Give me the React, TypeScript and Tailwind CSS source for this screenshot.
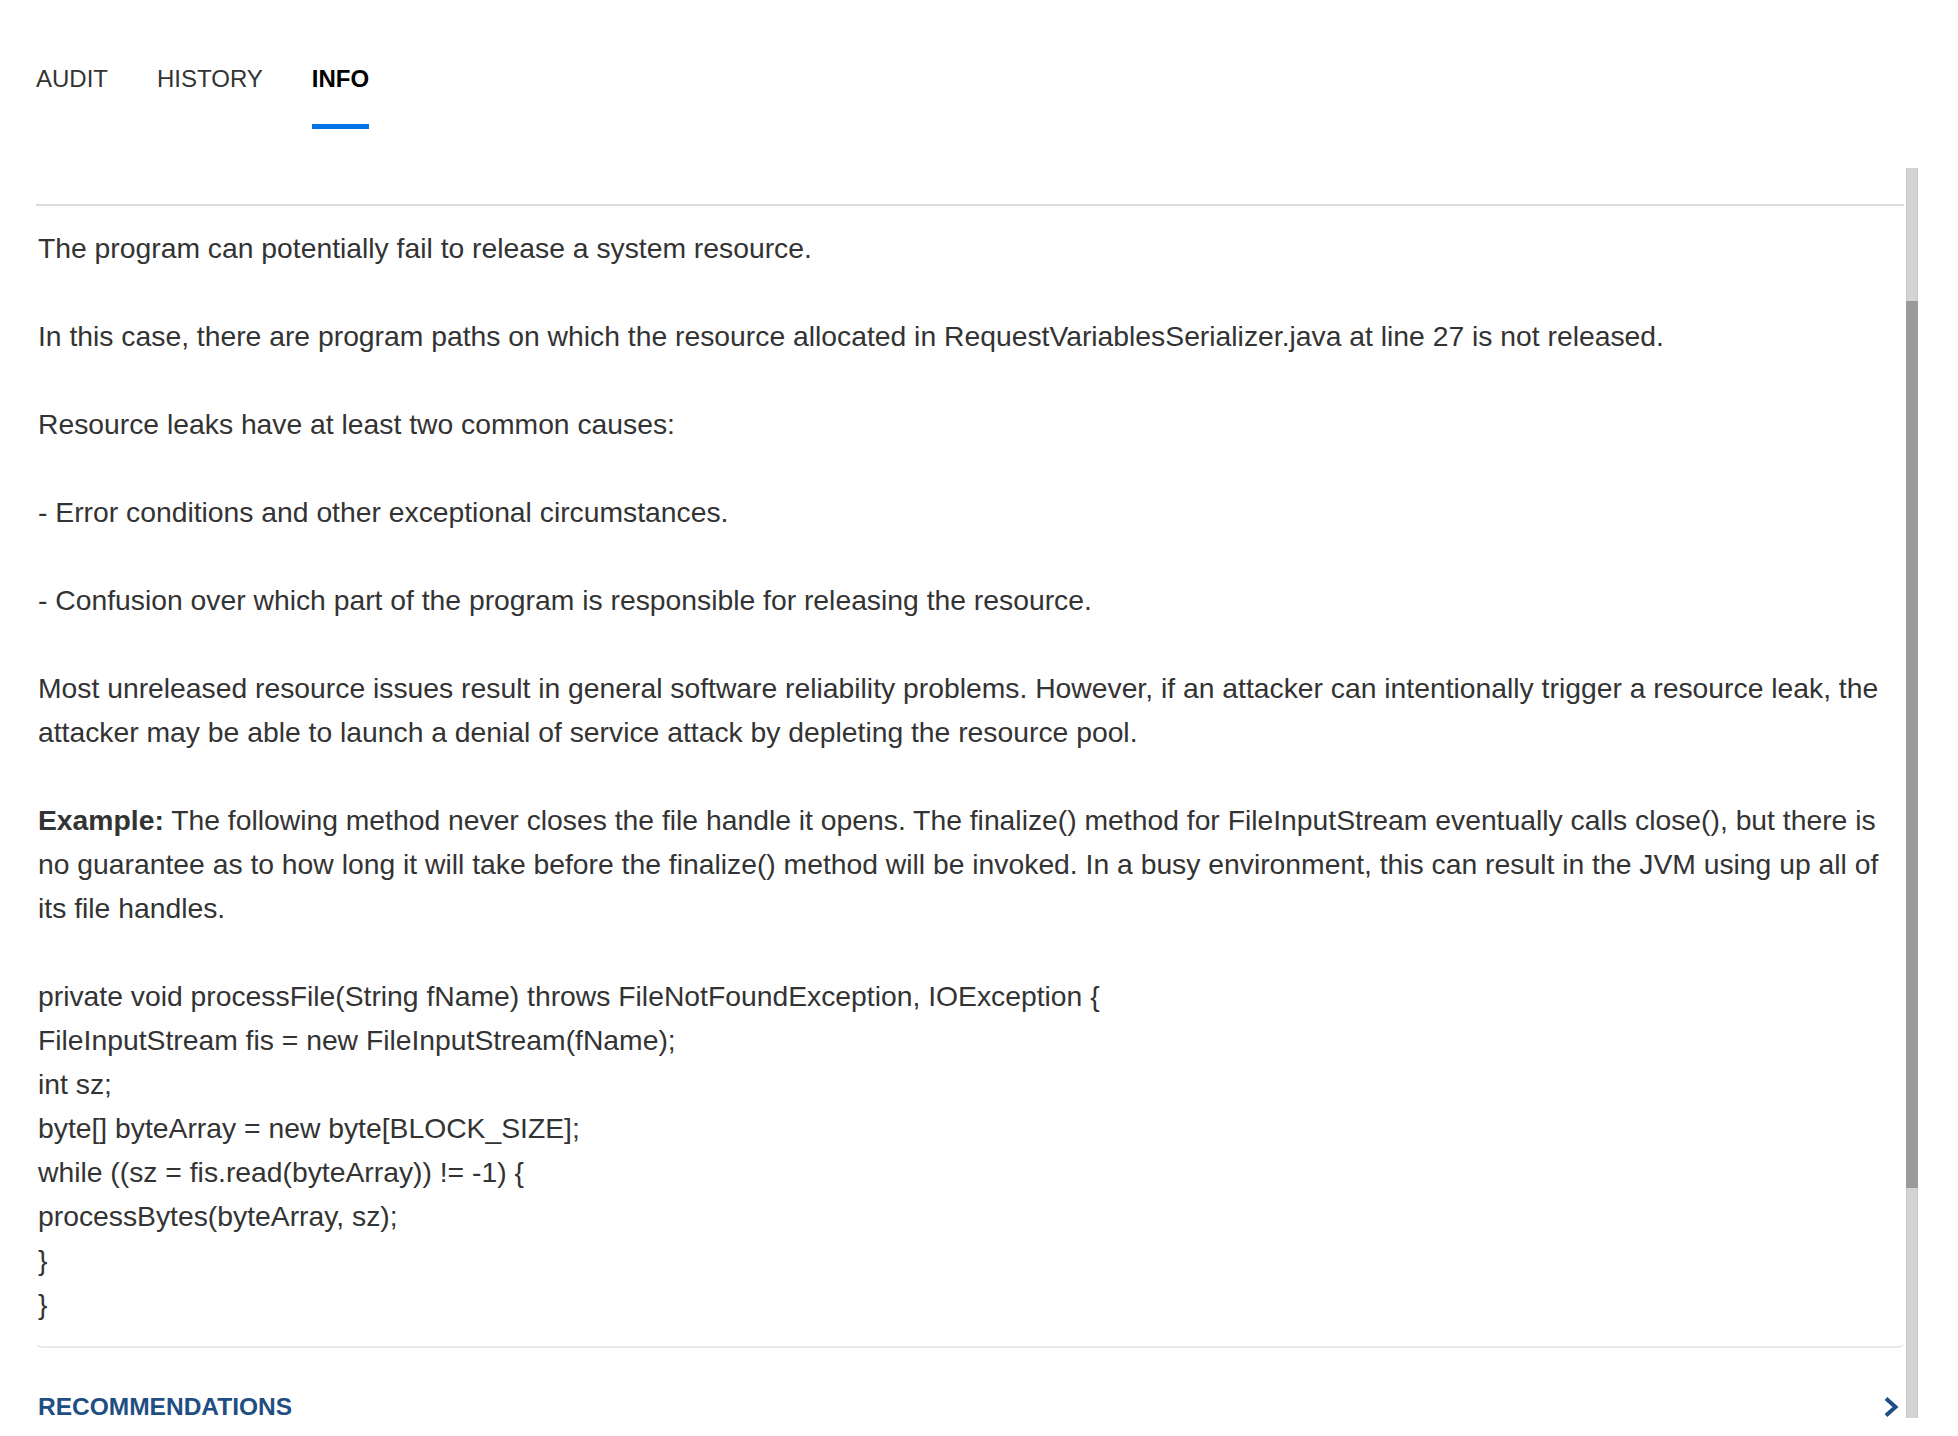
import React from "react";

const tabs = [
  { key: "audit", label: "AUDIT" },
  { key: "history", label: "HISTORY" },
  { key: "info", label: "INFO" },
];

const codeLines = [
  "private void processFile(String fName) throws FileNotFoundException, IOException {",
  "FileInputStream fis = new FileInputStream(fName);",
  "int sz;",
  "byte[] byteArray = new byte[BLOCK_SIZE];",
  "while ((sz = fis.read(byteArray)) != -1) {",
  "processBytes(byteArray, sz);",
  "}",
  "}",
];

export default function App() {
  const active = "info";

  return (
    <div
      className="min-h-screen bg-white pl-[36px] pr-[40px] pt-[65px] text-[#333]"
      style={{ fontFamily: '"Liberation Sans", Arial, sans-serif' }}
    >
      {/* tabs */}
      <div className="flex gap-[49px]">
        {tabs.map((t) => (
          <button
            key={t.key}
            className={
              t.key === active
                ? "border-b-[5px] border-[#0073e6] pb-[31px] text-[24px] font-bold leading-[28px] text-black"
                : "border-b-[5px] border-transparent pb-[31px] text-[24px] leading-[28px] text-[#333]"
            }
          >
            {t.label}
          </button>
        ))}
      </div>

      <div className="mt-[39px] flex gap-[2px]">
        <div className="flex-1 pt-[36px]">
          <div className="rounded-b-md border-t-2 border-b-2 border-t-[#dcdcdc] border-b-[#e8e8e8] pl-[2px] pt-[20px] pb-[20px] text-[28.3px] leading-[44px]">
            <p className="mb-[44px] whitespace-nowrap">The program can potentially fail to release a system resource.</p>
            <p className="mb-[44px] whitespace-nowrap">
              In this case, there are program paths on which the resource allocated in RequestVariablesSerializer.java at line 27 is not released.
            </p>
            <p className="mb-[44px] whitespace-nowrap">Resource leaks have at least two common causes:</p>
            <p className="mb-[44px] whitespace-nowrap">- Error conditions and other exceptional circumstances.</p>
            <p className="mb-[44px] whitespace-nowrap">- Confusion over which part of the program is responsible for releasing the resource.</p>
            <p className="mb-[44px] whitespace-nowrap">
              Most unreleased resource issues result in general software reliability problems. However, if an attacker can intentionally trigger a resource leak, the
              <br />
              attacker may be able to launch a denial of service attack by depleting the resource pool.
            </p>
            <p className="mb-[44px] whitespace-nowrap">
              <span className="font-bold">Example:</span> The following method never closes the file handle it opens. The finalize() method for FileInputStream eventually calls close(), but there is
              <br />
              no guarantee as to how long it will take before the finalize() method will be invoked. In a busy environment, this can result in the JVM using up all of
              <br />
              its file handles.
            </p>
            <div>
              {codeLines.map((line, i) => (
                <div key={i} className="whitespace-nowrap">
                  {line}
                </div>
              ))}
            </div>
          </div>

          <div className="mt-[45px] flex items-center justify-between pl-[2px] pr-[5px]">
            <span className="text-[24.5px] font-bold leading-[28px] text-[#1f4f82]">RECOMMENDATIONS</span>
            <svg width="16" height="22" viewBox="0 0 16 22" fill="none">
              <polyline points="3,2.5 12.5,11 3,19.5" stroke="#1f4f82" strokeWidth="4" strokeLinejoin="miter" />
            </svg>
          </div>
        </div>

        {/* scrollbar */}
        <div className="flex h-[1250px] w-3 flex-col border-x border-[#c6c6c6] bg-[#d4d4d4]">
          <div className="h-[133px]" />
          <div className="-mx-px h-[887px] bg-[#9a9a9a]" />
        </div>
      </div>
    </div>
  );
}
